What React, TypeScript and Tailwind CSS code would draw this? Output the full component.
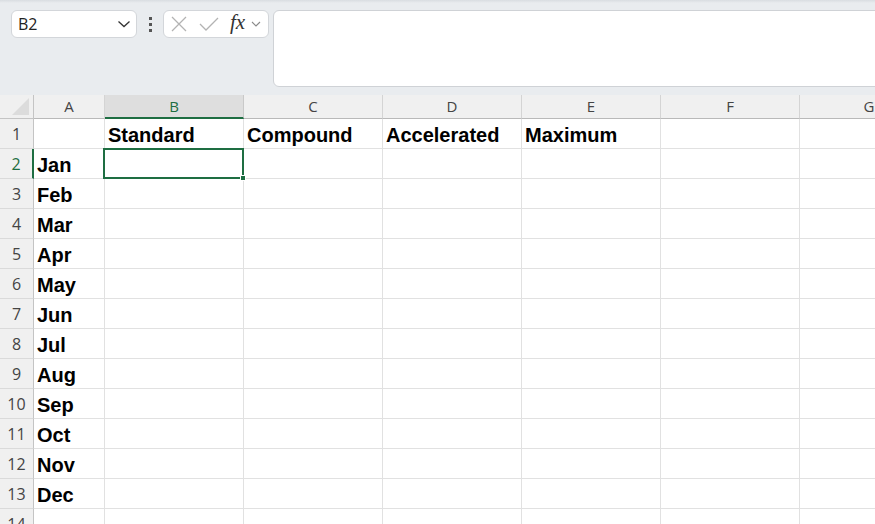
import React from 'react'

const columns = [
  { label: 'A', w: 'w-[71px]' },
  { label: 'B', w: 'w-[139px]' },
  { label: 'C', w: 'w-[139px]' },
  { label: 'D', w: 'w-[139px]' },
  { label: 'E', w: 'w-[139px]' },
  { label: 'F', w: 'w-[139px]' },
  { label: 'G', w: 'w-[139px]' },
]

const months = ['Jan', 'Feb', 'Mar', 'Apr', 'May', 'Jun', 'Jul', 'Aug', 'Sep', 'Oct', 'Nov', 'Dec']

// row 1 holds the headings, rows 2-13 the months, row 14 is cut off at the bottom
const rows: string[][] = [
  ['', 'Standard', 'Compound', 'Accelerated', 'Maximum', '', ''],
  ...months.map((m) => [m, '', '', '', '', '', '']),
  ['', '', '', '', '', '', ''],
]

function Toolbar() {
  return (
    <div className="relative h-[95px] bg-[#e9ecef] flex items-start pt-[10px] pl-[11px] overflow-hidden">
      <div className="absolute left-0 right-0 top-0 h-[3px] bg-gradient-to-b from-[#d9dde1] to-[#e9ecef]" />
      <div className="w-[126px] h-[28px] shrink-0 bg-white border border-[#d3d6da] rounded-[6px] flex items-center justify-between pl-[6px] pr-[5px]">
        <span className="text-[16px] text-[#222] font-['Open_Sans',sans-serif]">B2</span>
        <svg width="14" height="14" viewBox="0 0 14 14" fill="none">
          <path d="M1.5 4.5 L7 9.5 L12.5 4.5" stroke="#333" strokeWidth="1.3" />
        </svg>
      </div>
      <div className="w-[26px] h-[28px] shrink-0 flex flex-col items-center justify-center gap-[3px]">
        <div className="w-[3px] h-[3px] bg-[#555]" />
        <div className="w-[3px] h-[3px] bg-[#555]" />
        <div className="w-[3px] h-[3px] bg-[#555]" />
      </div>
      <div className="w-[106px] h-[28px] shrink-0 bg-white border border-[#d3d6da] rounded-[6px] flex items-center pl-[7px]">
        <svg width="16" height="16" viewBox="0 0 16 16" fill="none">
          <path d="M1 1 L15 15 M15 1 L1 15" stroke="#b3b3b3" strokeWidth="1.3" />
        </svg>
        <svg width="20" height="16" viewBox="0 0 20 16" fill="none" className="ml-[12px]">
          <path d="M1 8 L7 14 L19 2" stroke="#b3b3b3" strokeWidth="1.3" />
        </svg>
        <span className="ml-[11px] text-[21px] leading-none italic text-[#333] font-['Liberation_Serif',serif] -mt-[3px]">
          fx
        </span>
        <svg width="10" height="10" viewBox="0 0 10 10" fill="none" className="ml-[6px]">
          <path d="M1 3 L5 7 L9 3" stroke="#8a8a8a" strokeWidth="1.1" />
        </svg>
      </div>
      <div className="ml-[4px] w-[640px] h-[77px] shrink-0 bg-white border border-[#cfd2d6] rounded-[6px]" />
    </div>
  )
}

function Grid() {
  return (
    <div className="relative">
      {/* column headings */}
      <div className="flex h-[24px]">
        <div className="w-[34px] shrink-0 bg-[#f0f0f0] border-r border-b border-[#c4c4c4] relative">
          <svg width="18" height="17" viewBox="0 0 18 17" className="absolute right-[3px] bottom-[3px]">
            <path d="M17 0 L17 17 L0 17 Z" fill="#dcdcdc" />
          </svg>
        </div>
        {columns.map((c) => (
          <div
            key={c.label}
            className={`${c.w} shrink-0 flex items-center justify-center text-[15px] font-['Open_Sans',sans-serif] border-r ${
              c.label === 'B'
                ? 'bg-[#dedede] text-[#1e6e42] border-b-2 border-b-[#1e6e42] border-r-[#c9c9c9]'
                : 'bg-[#f0f0f0] text-[#444] border-b border-b-[#b9b9b9] border-r-[#d4d4d4]'
            }`}
          >
            {c.label}
          </div>
        ))}
      </div>

      {rows.map((r, i) => (
        <div key={i} className="flex h-[30px]">
          <div
            className={`w-[34px] shrink-0 bg-[#f0f0f0] flex items-center justify-center text-[16px] font-['Open_Sans',sans-serif] border-b border-b-[#dadada] ${
              i === 1 ? 'text-[#1e6e42] border-r-2 border-r-[#1e6e42]' : 'text-[#444] border-r border-r-[#c4c4c4]'
            }`}
          >
            {i + 1}
          </div>
          {r.map((v, j) => (
            <div
              key={j}
              className={`${columns[j].w} shrink-0 bg-white border-r border-b border-[#e1e1e1] flex items-end pl-[3px] pb-[3px] overflow-hidden`}
            >
              <span className="text-[20px] leading-[20px] font-bold text-black font-['Liberation_Sans',Arial,sans-serif] whitespace-nowrap">
                {v}
              </span>
            </div>
          ))}
        </div>
      ))}

      {/* active cell B2 */}
      <div className="absolute left-[103px] top-[53px] w-[141px] h-[31px] border-2 border-[#1e6e42]" />
      <div className="absolute left-[240px] top-[80px] w-[6px] h-[6px] bg-[#1e6e42] border border-white" />
    </div>
  )
}

export default function App() {
  return (
    <div className="w-[875px] h-[524px] overflow-hidden bg-white">
      <Toolbar />
      <Grid />
    </div>
  )
}
